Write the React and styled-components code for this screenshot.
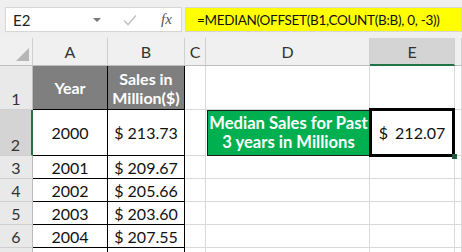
import React from 'react';
import styled, { createGlobalStyle } from 'styled-components';

const GlobalStyle = createGlobalStyle`
  html, body {
    margin: 0;
    padding: 0;
    background: #ffffff;
    font-family: Lato, "Open Sans", sans-serif;
  }
`

const Page = styled.div`
  width: 462px;
  height: 252px;
  overflow: hidden;
  background: #ffffff;
`

const Toolbar = styled.div`
  height: 38px;
  box-sizing: border-box;
  background: #efefef;
  display: flex;
  align-items: flex-start;
  padding: 7px 0 0 5px;
  gap: 3px;
`

const NameBox = styled.div`
  width: 177px;
  height: 25px;
  box-sizing: border-box;
  background: #ffffff;
  border: 1px solid #d6d6d6;
  display: flex;
  align-items: center;
  padding-left: 7px;
  color: #222;
  font-size: 15px;
`

const NameText = styled.span`
  width: 80px;
`

const Caret = styled.span`
  width: 0;
  height: 0;
  border-left: 4px solid transparent;
  border-right: 4px solid transparent;
  border-top: 4px solid #777;
  margin-right: 22px;
`

const Fx = styled.span`
  font-family: "Liberation Serif", serif;
  font-style: italic;
  font-size: 15px;
  color: #555;
  margin-left: 24px;
`

const FormulaBar = styled.div`
  flex: 1;
  height: 25px;
  box-sizing: border-box;
  background: #ffff00;
  border: 1px solid #d6d6d6;
  display: flex;
  align-items: center;
  padding-left: 11px;
  font-size: 13.5px;
  letter-spacing: -0.3px;
  color: #111;
  white-space: nowrap;
`

const Sheet = styled.div`
  display: grid;
  grid-template-columns: 33px 75px 77px 21px 164px 85px 1fr;
  grid-template-rows: 28px 44px 46px 23px 23px 23px 23px 23px;
`

const ColHead = styled.div`
  box-sizing: border-box;
  background: ${p => (p.$active ? '#d4d4d4' : '#f0f0f0')};
  border-right: 1px solid #cfcfcf;
  border-bottom: ${p => (p.$active ? '2px solid #217346' : '1px solid #bdbdbd')};
  display: flex;
  align-items: center;
  justify-content: center;
  font-size: 16px;
  color: #333;
`

const Corner = styled(ColHead)`
  position: relative;
  &::after {
    content: '';
    position: absolute;
    right: 3px;
    bottom: 4px;
    width: 0;
    height: 0;
    border-left: 13px solid transparent;
    border-bottom: 13px solid #b6b6b6;
  }
`

const RowHead = styled.div`
  box-sizing: border-box;
  background: ${p => (p.$active ? '#d4d4d4' : '#e9e9e9')};
  border-right: ${p => (p.$active ? '2px solid #217346' : '1px solid #bdbdbd')};
  border-bottom: 1px solid #cfcfcf;
  display: flex;
  align-items: flex-end;
  justify-content: center;
  padding-bottom: 1px;
  font-size: 16px;
  color: #333;
`

const Cell = styled.div`
  box-sizing: border-box;
  border-right: 1px solid ${p => (p.$boxed ? '#000' : '#d9d9d9')};
  border-bottom: 1px solid ${p => (p.$boxed ? '#000' : '#d9d9d9')};
  background: ${p => p.$fill || '#ffffff'};
  color: ${p => (p.$fill ? '#ffffff' : '#111')};
  font-weight: ${p => (p.$fill ? 700 : 400)};
  display: flex;
  align-items: center;
  justify-content: center;
  text-align: center;
  font-size: 16px;
  line-height: 19px;
`

const MedianLabel = styled(Cell)`
  background: #00b050;
  color: #ffffff;
  font-weight: 700;
  font-size: 16.6px;
  border: 1px solid #1c1c1c;
  margin-left: 1px;
`

const Result = styled(Cell)`
  position: relative;
  border: 3px solid #000;
  margin: -2px 0 -1px -1px;
  word-spacing: 3px;
  &::after {
    content: '';
    position: absolute;
    right: -5px;
    bottom: -5px;
    width: 5px;
    height: 5px;
    background: #1e5b3a;
  }
`

const data = [
  ['2001', '$ 209.67'],
  ['2002', '$ 205.66'],
  ['2003', '$ 203.60'],
  ['2004', '$ 207.55'],
];

function App() {
  return (
    <Page>
      <GlobalStyle />
      <Toolbar>
        <NameBox>
          <NameText>E2</NameText>
          <Caret />
          <svg width="14" height="12" viewBox="0 0 14 12">
            <path d="M1 6.5 L5 10.5 L13 1.5" fill="none" stroke="#c4c4c4" strokeWidth="1.6" />
          </svg>
          <Fx>fx</Fx>
        </NameBox>
        <FormulaBar>=MEDIAN(OFFSET(B1,COUNT(B:B), 0, -3))</FormulaBar>
      </Toolbar>
      <Sheet>
        <Corner />
        <ColHead>A</ColHead>
        <ColHead>B</ColHead>
        <ColHead>C</ColHead>
        <ColHead>D</ColHead>
        <ColHead $active>E</ColHead>
        <ColHead />

        <RowHead>1</RowHead>
        <Cell $boxed $fill="#7f7f7f">Year</Cell>
        <Cell $boxed $fill="#7f7f7f">Sales in<br />Million($)</Cell>
        <Cell />
        <Cell />
        <Cell />
        <Cell />

        <RowHead $active>2</RowHead>
        <Cell $boxed>2000</Cell>
        <Cell $boxed>$ 213.73</Cell>
        <Cell />
        <MedianLabel>Median Sales for Past<br />3 years in Millions</MedianLabel>
        <Result>$ 212.07</Result>
        <Cell />

        {data.map(([year, sales], i) => (
          <React.Fragment key={year}>
            <RowHead>{i + 3}</RowHead>
            <Cell $boxed>{year}</Cell>
            <Cell $boxed>{sales}</Cell>
            <Cell />
            <Cell />
            <Cell />
            <Cell />
          </React.Fragment>
        ))}

        <RowHead />
        <Cell $boxed />
        <Cell $boxed />
        <Cell />
        <Cell />
        <Cell />
        <Cell />
      </Sheet>
    </Page>
  );
}

export default App;
